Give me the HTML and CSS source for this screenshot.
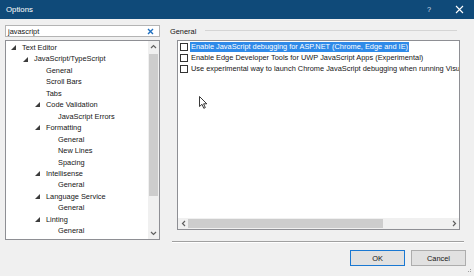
FILE: index.html
```html
<!DOCTYPE html>
<html>
<head>
<meta charset="utf-8">
<link rel="stylesheet" href="styles.css">
</head>
<body>
<div class="window">
  <div class="titlebar">
    <span class="title">Options</span>
    <span class="help">?</span>
    <svg class="close" width="9" height="9" viewBox="0 0 9 9"><path d="M1 1L8 8M8 1L1 8" stroke="#ffffff" stroke-width="1.1"/></svg>
  </div>
  <div class="main">
    <div class="left">
      <div class="search">
        <span class="search-text">javascript</span>
        <svg class="search-clear" width="7" height="7" viewBox="0 0 7 7"><path d="M1 1L6 6M6 1L1 6" stroke="#1f6fbf" stroke-width="1.4"/></svg>
      </div>
      <div class="tree">
        <div class="tree-items">
          <div class="row l0"><svg class="tri" width="5" height="5" viewBox="0 0 5 5"><polygon points="5,0 5,5 0,5" fill="#3c3c3c"/></svg>Text Editor</div>
          <div class="row l1"><svg class="tri" width="5" height="5" viewBox="0 0 5 5"><polygon points="5,0 5,5 0,5" fill="#3c3c3c"/></svg>JavaScript/TypeScript</div>
          <div class="row l2">General</div>
          <div class="row l2">Scroll Bars</div>
          <div class="row l2">Tabs</div>
          <div class="row l2"><svg class="tri" width="5" height="5" viewBox="0 0 5 5"><polygon points="5,0 5,5 0,5" fill="#3c3c3c"/></svg>Code Validation</div>
          <div class="row l3">JavaScript Errors</div>
          <div class="row l2"><svg class="tri" width="5" height="5" viewBox="0 0 5 5"><polygon points="5,0 5,5 0,5" fill="#3c3c3c"/></svg>Formatting</div>
          <div class="row l3">General</div>
          <div class="row l3">New Lines</div>
          <div class="row l3">Spacing</div>
          <div class="row l2"><svg class="tri" width="5" height="5" viewBox="0 0 5 5"><polygon points="5,0 5,5 0,5" fill="#3c3c3c"/></svg>Intellisense</div>
          <div class="row l3">General</div>
          <div class="row l2"><svg class="tri" width="5" height="5" viewBox="0 0 5 5"><polygon points="5,0 5,5 0,5" fill="#3c3c3c"/></svg>Language Service</div>
          <div class="row l3">General</div>
          <div class="row l2"><svg class="tri" width="5" height="5" viewBox="0 0 5 5"><polygon points="5,0 5,5 0,5" fill="#3c3c3c"/></svg>Linting</div>
          <div class="row l3">General</div>
          <div class="row l2"><svg class="tri" width="5" height="5" viewBox="0 0 5 5"><polygon points="5,0 5,5 0,5" fill="#3c3c3c"/></svg>Project</div>
        </div>
        <div class="vscroll">
          <div class="sbtn"><svg width="7" height="5" viewBox="0 0 7 5"><path d="M1 4L3.5 1.5L6 4" stroke="#606060" stroke-width="1.2" fill="none"/></svg></div>
          <div class="vthumb"></div>
          <div class="vtrack"></div>
          <div class="sbtn"><svg width="7" height="5" viewBox="0 0 7 5"><path d="M1 1L3.5 3.5L6 1" stroke="#606060" stroke-width="1.2" fill="none"/></svg></div>
        </div>
      </div>
    </div>
    <div class="right">
      <div class="group-head">
        <span class="group-label">General</span>
        <span class="group-line"></span>
      </div>
      <div class="listbox">
        <div class="list">
          <div class="item"><span class="cb"></span><span class="label selected">Enable JavaScript debugging for ASP.NET (Chrome, Edge and IE)</span></div>
          <div class="item"><span class="cb"></span><span class="label">Enable Edge Developer Tools for UWP JavaScript Apps (Experimental)</span></div>
          <div class="item"><span class="cb"></span><span class="label">Use experimental way to launch Chrome JavaScript debugging when running Visual Studio</span></div>
          <svg class="cursor" width="9" height="13" viewBox="0 0 9 13"><path d="M0.5 0.5L0.5 10.5L3 8.3L4.8 12.3L6.3 11.6L4.6 7.8L7.8 7.8Z" fill="#ffffff" stroke="#222222" stroke-width="0.9" stroke-linejoin="round"/></svg>
        </div>
        <div class="hscroll">
          <div class="hbtn"><svg width="5" height="7" viewBox="0 0 5 7"><path d="M4 1L1.5 3.5L4 6" stroke="#606060" stroke-width="1.2" fill="none"/></svg></div>
          <div class="hthumb"></div>
          <div class="htrack"></div>
          <div class="hbtn"><svg width="5" height="7" viewBox="0 0 5 7"><path d="M1 1L3.5 3.5L1 6" stroke="#606060" stroke-width="1.2" fill="none"/></svg></div>
        </div>
      </div>
      <div class="separator"></div>
      <div class="buttons">
        <div class="btn default">OK</div>
        <div class="btn">Cancel</div>
      </div>
    </div>
  </div>
  <svg class="grip" width="4" height="4" viewBox="0 0 4 4"><rect x="2" y="0" width="1" height="1" fill="#a0a0a0"/><rect x="0" y="2" width="1" height="1" fill="#a0a0a0"/><rect x="2" y="2" width="1" height="1" fill="#a0a0a0"/></svg>
</div>
</body>
</html>
```
FILE: styles.css
```css
html, body {
  margin: 0;
  padding: 0;
}
body {
  width: 474px;
  height: 276px;
  overflow: hidden;
  background: #f0f0f0;
  font-family: "Liberation Sans", Arial, sans-serif;
  font-size: 7.4px;
  color: #151515;
}
.window {
  position: relative;
  width: 474px;
  height: 276px;
}
.titlebar {
  height: 19px;
  background: #0f4a79;
  display: flex;
  align-items: center;
  color: #ffffff;
  padding-left: 6px;
}
.title {
  font-size: 7.8px;
  flex: 1;
}
.help {
  font-size: 7.4px;
  color: #d6dfe8;
  margin-right: 24px;
}
.close {
  margin-right: 10px;
}
.main {
  display: flex;
  align-items: flex-start;
  padding: 6px 0 0 5px;
}
.left {
  width: 155px;
  display: flex;
  flex-direction: column;
}
.search {
  height: 12px;
  box-sizing: border-box;
  border: 1px solid #b4b4b4;
  background: #ffffff;
  display: flex;
  align-items: center;
  padding-left: 2px;
  padding-right: 5px;
}
.search-text {
  flex: 1;
}
.tree {
  margin-top: 3px;
  height: 200px;
  box-sizing: border-box;
  border: 1px solid #8e8f94;
  background: #ffffff;
  display: flex;
}
.tree-items {
  flex: 1;
  overflow: hidden;
  padding-top: 1px;
  white-space: nowrap;
}
.row {
  height: 11.46px;
  line-height: 11.46px;
  display: flex;
  align-items: center;
}
.tri {
  margin-left: -11px;
  margin-right: 6px;
}
.l0 { padding-left: 16px; }
.l1 { padding-left: 28px; }
.l2 { padding-left: 40px; }
.l3 { padding-left: 52px; }
.vscroll {
  width: 11px;
  background: #f0f0f0;
  display: flex;
  flex-direction: column;
}
.sbtn {
  height: 11px;
  display: flex;
  align-items: center;
  justify-content: center;
}
.vthumb {
  height: 142px;
  margin: 2px 1px 0 1px;
  background: #cdcdcd;
}
.vtrack {
  flex: 1;
}
.right {
  margin-left: 10px;
  width: 296px;
  display: flex;
  flex-direction: column;
}
.group-head {
  height: 12px;
  display: flex;
  align-items: center;
}
.group-label {
  margin-right: 9px;
}
.group-line {
  flex: 1;
  height: 1px;
  background: #d5d5d5;
  margin-right: 9px;
  margin-top: -2px;
}
.listbox {
  margin-top: 3px;
  margin-left: 7px;
  width: 283px;
  height: 190px;
  box-sizing: border-box;
  border: 1px solid #8e8f94;
  background: #ffffff;
  display: flex;
  flex-direction: column;
}
.list {
  position: relative;
  flex: 1;
  overflow: hidden;
  white-space: nowrap;
  padding-left: 2px;
}
.item {
  height: 11.4px;
  display: flex;
  align-items: center;
}
.cb {
  width: 8px;
  height: 8px;
  box-sizing: border-box;
  border: 1px solid #333333;
  background: #ffffff;
  margin-right: 2px;
  flex: none;
}
.label {
  padding: 0 1px;
  line-height: 10px;
}
.selected {
  background: #2f8ae8;
  color: #ffffff;
}
.cursor {
  position: absolute;
  left: 21px;
  top: 55px;
}
.hscroll {
  height: 11px;
  background: #f0f0f0;
  display: flex;
}
.hbtn {
  width: 10px;
  display: flex;
  align-items: center;
  justify-content: center;
}
.hthumb {
  width: 195px;
  margin: 1px 0;
  background: #cdcdcd;
}
.htrack {
  flex: 1;
}
.separator {
  margin-top: 11px;
  margin-left: 2px;
  width: 292px;
  height: 1px;
  background: #a0a0a0;
  border-bottom: 1px solid #ffffff;
}
.buttons {
  margin-top: 7px;
  display: flex;
  justify-content: flex-end;
  gap: 6px;
}
.btn {
  width: 55px;
  height: 16px;
  box-sizing: border-box;
  border: 1px solid #adadad;
  background: #e1e1e1;
  display: flex;
  align-items: center;
  justify-content: center;
}
.btn.default {
  border-color: #1a78d2;
}
.grip {
  position: absolute;
  right: 2px;
  bottom: 3px;
}
```
